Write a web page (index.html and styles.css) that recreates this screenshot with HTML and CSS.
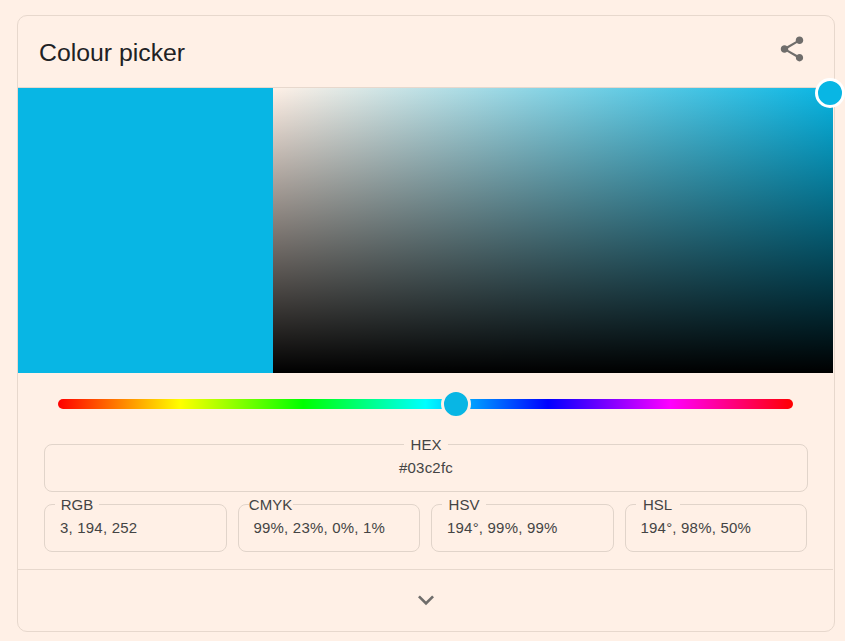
FILE: index.html
```html
<!DOCTYPE html>
<html lang="en">
<head>
<meta charset="utf-8">
<title>Colour picker</title>
<link rel="stylesheet" href="styles.css">
</head>
<body>
<main class="card">
  <header class="card-head">
    <h1 class="title">Colour picker</h1>
    <button class="icon-btn share-btn" aria-label="Share">
      <svg class="share-icon" viewBox="0 0 24 24"><path d="M18 16.08c-.76 0-1.44.3-1.96.77L8.91 12.7c.05-.23.09-.46.09-.7s-.04-.47-.09-.7l7.05-4.11c.54.5 1.25.81 2.04.81 1.66 0 3-1.34 3-3s-1.34-3-3-3-3 1.34-3 3c0 .24.04.47.09.7L8.04 9.81C7.5 9.31 6.79 9 6 9c-1.66 0-3 1.34-3 3s1.34 3 3 3c.79 0 1.5-.31 2.04-.81l7.12 4.16c-.05.21-.08.43-.08.65 0 1.61 1.31 2.92 2.92 2.92 1.61 0 2.92-1.31 2.92-2.92s-1.31-2.92-2.92-2.92z"/></svg>
    </button>
  </header>
  <section class="picker">
    <div class="swatch"></div>
    <div class="palette"><span class="palette-thumb"></span></div>
  </section>
  <section class="hue">
    <div class="hue-track"><span class="hue-thumb"></span></div>
  </section>
  <section class="fields">
    <fieldset class="field field-hex">
      <legend class="legend legend-hex">HEX</legend>
      <div class="value value-hex">#03c2fc</div>
    </fieldset>
    <div class="field-row">
      <fieldset class="field"><legend class="legend">RGB</legend><div class="value">3, 194, 252</div></fieldset>
      <fieldset class="field"><legend class="legend">CMYK</legend><div class="value">99%, 23%, 0%, 1%</div></fieldset>
      <fieldset class="field"><legend class="legend">HSV</legend><div class="value">194°, 99%, 99%</div></fieldset>
      <fieldset class="field"><legend class="legend">HSL</legend><div class="value">194°, 98%, 50%</div></fieldset>
    </div>
  </section>
  <footer class="card-foot">
    <button class="icon-btn chevron-btn" aria-label="Expand">
      <svg class="chevron" viewBox="0 0 24 24"><path d="M16.59 8.59L12 13.17 7.41 8.59 6 10l6 6 6-6z"/></svg>
    </button>
  </footer>
</main>
</body>
</html>
```
FILE: styles.css
```css
* { box-sizing: border-box; }
html, body { height: 100%; }
body {
  margin: 0;
  background: #fff0e6;
  font-family: "Liberation Sans", Arial, sans-serif;
  color: #444;
  overflow: hidden;
}
.card {
  width: 818px;
  height: 617px;
  margin: 15px 0 0 17px;
  padding-right: 1px;
  border: 1px solid #e7d8cd;
  border-radius: 10px;
  display: flex;
  flex-direction: column;
}
.card-head {
  height: 72px;
  flex: none;
  display: flex;
  align-items: center;
  justify-content: space-between;
  padding: 2px 26px 0 21px;
  border-bottom: 1px solid #e7d8cd;
}
.title {
  margin: 0;
  font-size: 24.8px;
  font-weight: 400;
  line-height: 30px;
  color: #202124;
}
.icon-btn {
  display: flex;
  padding: 0;
  border: 0;
  background: none;
}
.share-btn { margin-top: -8px; }
.chevron-btn { margin-bottom: 2px; }
.share-icon { width: 30px; height: 30px; fill: #6f6d6b; }
.chevron { width: 32px; height: 32px; fill: #6f6d6b; }
.picker {
  height: 285px;
  flex: none;
  display: flex;
}
.swatch { width: 255px; flex: none; background: #08b6e4; }
.palette {
  flex: 1;
  position: relative;
  background:
    linear-gradient(to top, #000, rgba(0, 0, 0, 0)),
    linear-gradient(to right, #fff0e6, #08b6e4);
}
.palette-thumb {
  position: absolute;
  top: -10px;
  right: -12px;
  width: 30px;
  height: 30px;
  border-radius: 50%;
  background: #08b6e4;
  border: 3px solid #fff;
}
.hue {
  height: 63px;
  flex: none;
  padding: 26px 40px 0 40px;
}
.hue-track {
  position: relative;
  height: 10px;
  border-radius: 5px;
  background: linear-gradient(to right, #f00 0%, #ff0 16.67%, #0f0 33.33%, #0ff 50%, #00f 66.67%, #f0f 83.33%, #f00 100%);
}
.hue-thumb {
  position: absolute;
  top: -10px;
  left: 383px;
  width: 30px;
  height: 30px;
  border-radius: 50%;
  background: #08b6e4;
  border: 3px solid #fff0e6;
}
.fields {
  flex: none;
  padding: 0 25px 0 26px;
  display: flex;
  flex-direction: column;
  gap: 4px;
}
.field {
  margin: 0;
  padding: 0;
  min-width: 0;
  height: 56px;
  border: 1px solid #e1d4ca;
  border-radius: 8px;
}
.field-row {
  width: 763px;
  display: grid;
  grid-template-columns: repeat(4, 1fr);
  gap: 11px;
}
.legend {
  width: 44px;
  margin: 0 auto 0 10px;
  padding: 0;
  font-size: 15px;
  line-height: 17px;
  text-align: center;
  white-space: nowrap;
}
.legend-hex { margin: 0 auto; }
.value {
  padding: 6px 0 0 15px;
  font-size: 15px;
  line-height: 18px;
  letter-spacing: 0.2px;
  white-space: nowrap;
}
.value-hex { padding-left: 0; text-align: center; }
.card-foot {
  flex: 1;
  margin-top: 17px;
  border-top: 1px solid #e7d8cd;
  display: flex;
  align-items: center;
  justify-content: center;
}
```
